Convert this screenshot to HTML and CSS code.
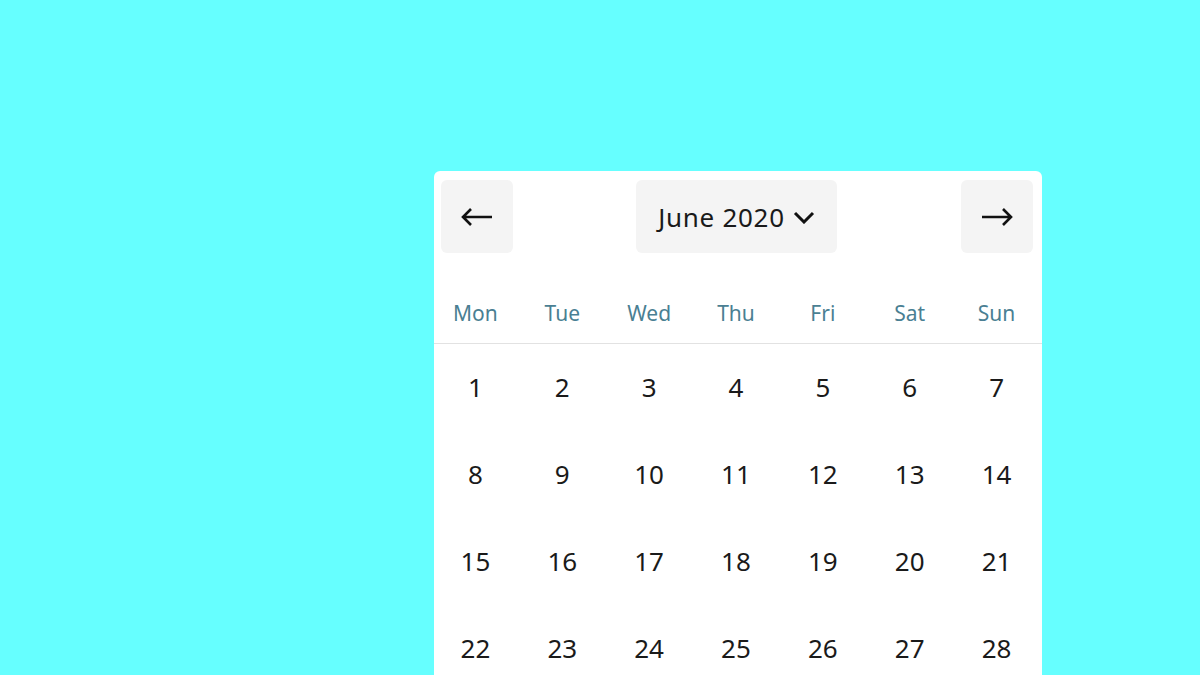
FILE: index.html
```html
<!DOCTYPE html>
<html lang="en">
<head>
    <meta charset="UTF-8">
    <meta name="viewport" content="width=device-width, initial-scale=1.0">
    <title>Date Picker</title>
    <link rel="stylesheet" href="styles.css">
</head>
<body>
    <div class="picker">
        <div class="picker-header">
            <button class="nav-btn" aria-label="Previous month">
                <svg width="34" height="20" viewBox="0 0 34 20"><path d="M32 10H3M11 2L3 10l8 8" fill="none" stroke="#111" stroke-width="2.6"/></svg>
            </button>
            <button class="month-btn">
                June 2020
                <svg width="22" height="13" viewBox="0 0 22 13"><path d="M2 2l9 9 9-9" fill="none" stroke="#111" stroke-width="3"/></svg>
            </button>
            <button class="nav-btn" aria-label="Next month">
                <svg width="34" height="20" viewBox="0 0 34 20"><path d="M2 10h29M23 2l8 8-8 8" fill="none" stroke="#111" stroke-width="2.6"/></svg>
            </button>
        </div>

        <div class="weekdays">
            <span>Mon</span><span>Tue</span><span>Wed</span><span>Thu</span><span>Fri</span><span>Sat</span><span>Sun</span>
        </div>

        <div class="days" id="days"></div>
    </div>

    <script>
        const daysGrid = document.getElementById('days');

        // June 2020 starts on a Monday, 30 days
        for (let d = 1; d <= 30; d++) {
            const cell = document.createElement('div');
            cell.className = 'day';
            cell.textContent = d;
            daysGrid.appendChild(cell);
        }
    </script>
</body>
</html>
```

FILE: styles.css
```css
body {
    font-family: 'Noto Sans', 'Open Sans', sans-serif;
    background-color: #66ffff;
    margin: 0;
    padding: 171px 0 0 434px;
    overflow: hidden;
}
.picker {
    width: 608px;
    background: #fff;
    border-radius: 6px 6px 0 0;
}
.picker-header {
    display: flex;
    justify-content: space-between;
    align-items: center;
    padding: 9px 9px 0 7px;
}
.nav-btn, .month-btn {
    background: #f4f4f4;
    border: none;
    border-radius: 6px;
    height: 73px;
    cursor: pointer;
    display: flex;
    align-items: center;
    justify-content: center;
    padding: 0;
    color: #1a1a1a;
}
.nav-btn {
    width: 72px;
}
.month-btn {
    width: 201px;
    margin-right: 1px;
    font-family: inherit;
    font-size: 26px;
    letter-spacing: 0.7px;
    gap: 8px;
}
.month-btn svg {
    margin-top: 2px;
}
.weekdays {
    display: grid;
    grid-template-columns: repeat(7, 1fr);
    margin-top: 30px;
    height: 60px;
    line-height: 60px;
    border-bottom: 1px solid #e2e2e2;
    text-align: center;
    color: #4a7f93;
    font-size: 21px;
}
.weekdays span {
    padding-right: 4px;
}
.days {
    display: grid;
    grid-template-columns: repeat(7, 1fr);
    grid-auto-rows: 87px;
}
.day {
    display: flex;
    align-items: center;
    justify-content: center;
    padding: 0 4px 2px 0;
    font-size: 26px;
    color: #1a1a1a;
}
```
